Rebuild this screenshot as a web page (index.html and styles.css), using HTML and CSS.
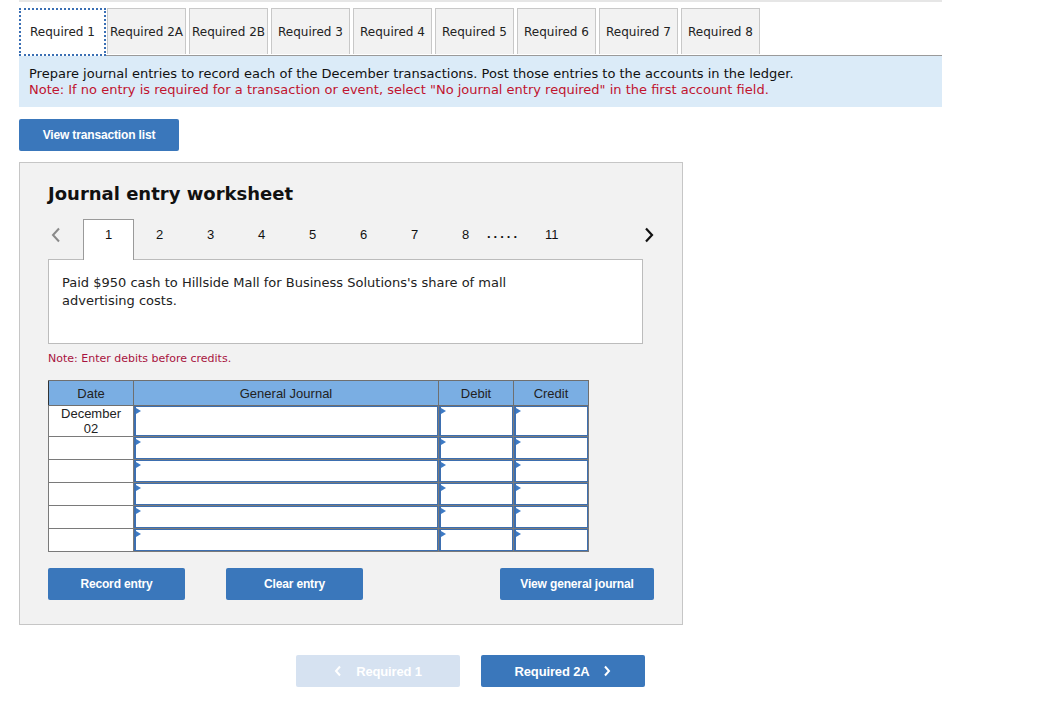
FILE: index.html
```html
<!DOCTYPE html>
<html lang="en">
<head>
<meta charset="UTF-8">
<meta name="viewport" content="width=device-width, initial-scale=1.0">
<title>Journal Entries</title>
<link rel="stylesheet" href="styles.css">
</head>
<body>

<div class="page">
  <div class="req-tabs">
    <div class="req-tab active">Required 1</div>
    <div class="req-tab">Required 2A</div>
    <div class="req-tab">Required 2B</div>
    <div class="req-tab">Required 3</div>
    <div class="req-tab">Required 4</div>
    <div class="req-tab">Required 5</div>
    <div class="req-tab">Required 6</div>
    <div class="req-tab">Required 7</div>
    <div class="req-tab">Required 8</div>
  </div>

  <div class="instructions">
    <p>Prepare journal entries to record each of the December transactions. Post those entries to the accounts in the ledger.</p>
    <p class="note">Note: If no entry is required for a transaction or event, select "No journal entry required" in the first account field.</p>
  </div>

  <button class="btn btn-list">View transaction list</button>

  <div class="worksheet">
    <h2>Journal entry worksheet</h2>

    <div class="entry-nav">
      <span class="arrow prev">
        <svg width="10" height="16" viewBox="0 0 10 16"><path d="M8 1.5 L2 8 L8 14.5" fill="none" stroke="#8a8a8a" stroke-width="2"/></svg>
      </span>
      <span class="num current">1</span>
      <span class="num">2</span>
      <span class="num">3</span>
      <span class="num">4</span>
      <span class="num">5</span>
      <span class="num">6</span>
      <span class="num">7</span>
      <span class="num">8</span>
      <span class="dots">.....</span>
      <span class="num last">11</span>
      <span class="arrow next">
        <svg width="10" height="16" viewBox="0 0 10 16"><path d="M2 1.5 L8 8 L2 14.5" fill="none" stroke="#111" stroke-width="2.2"/></svg>
      </span>
    </div>

    <div class="description">
      Paid $950 cash to Hillside Mall for Business Solutions's share of mall<br>
      advertising costs.
    </div>

    <p class="debit-note">Note: Enter debits before credits.</p>

    <table class="journal">
      <thead>
        <tr>
          <th class="c-date">Date</th>
          <th class="c-acct">General Journal</th>
          <th class="c-amt">Debit</th>
          <th class="c-amt">Credit</th>
        </tr>
      </thead>
      <tbody>
        <tr class="first">
          <td class="date">December<br>02</td>
          <td><div class="field"></div></td>
          <td><div class="field"></div></td>
          <td><div class="field"></div></td>
        </tr>
        <tr>
          <td class="date"></td>
          <td><div class="field"></div></td>
          <td><div class="field"></div></td>
          <td><div class="field"></div></td>
        </tr>
        <tr>
          <td class="date"></td>
          <td><div class="field"></div></td>
          <td><div class="field"></div></td>
          <td><div class="field"></div></td>
        </tr>
        <tr>
          <td class="date"></td>
          <td><div class="field"></div></td>
          <td><div class="field"></div></td>
          <td><div class="field"></div></td>
        </tr>
        <tr>
          <td class="date"></td>
          <td><div class="field"></div></td>
          <td><div class="field"></div></td>
          <td><div class="field"></div></td>
        </tr>
        <tr>
          <td class="date"></td>
          <td><div class="field"></div></td>
          <td><div class="field"></div></td>
          <td><div class="field"></div></td>
        </tr>
      </tbody>
    </table>

    <div class="actions">
      <button class="btn btn-record">Record entry</button>
      <button class="btn btn-clear">Clear entry</button>
      <button class="btn btn-journal">View general journal</button>
    </div>
  </div>

  <div class="pager">
    <button class="btn btn-pager disabled">
      <svg width="8" height="12" viewBox="0 0 8 12"><path d="M6 1.5 L2 6 L6 10.5" fill="none" stroke="#fff" stroke-width="2"/></svg>
      Required 1
    </button>
    <button class="btn btn-pager">
      Required 2A
      <svg width="8" height="12" viewBox="0 0 8 12"><path d="M2 1.5 L6 6 L2 10.5" fill="none" stroke="#fff" stroke-width="2"/></svg>
    </button>
  </div>
</div>

</body>
</html>
```

FILE: styles.css
```css
body {
  margin: 0;
  background: #fff;
  font-family: "DejaVu Sans", Verdana, sans-serif;
  color: #111;
}

.page {
  margin-left: 19px;
  width: 923px;
  border-top: 2px solid #e6e6e6;
}

/* requirement tabs */
.req-tabs {
  display: flex;
  gap: 3px;
  margin-top: 6px;
  border-bottom: 1px solid #9a9a9a;
}
.req-tab {
  width: 77px;
  height: 45px;
  line-height: 47px;
  text-align: center;
  font-size: 12px;
  background: #f2f2f2;
  border: 1px solid #c8c8c8;
  border-bottom: none;
  color: #222;
  white-space: nowrap;
}
.req-tab.active {
  width: 83px;
  height: 44px;
  background: #fff;
  border: 2px dotted #3a6fb4;
  border-bottom: 2px dotted #3a6fb4;
  margin-right: -2px;
  margin-bottom: -1px;
  line-height: 45px;
}

.instructions {
  background: #dbebf8;
  padding: 10px 10px 9px;
  font-size: 13px;
  line-height: 16px;
}
.instructions p {
  margin: 0;
}
.instructions .note {
  color: #c0142f;
}

/* buttons */
.btn {
  font-family: "Liberation Sans", Arial, sans-serif;
  font-weight: bold;
  font-size: 12px;
  letter-spacing: -0.15px;
  color: #fff;
  background: #3a77bb;
  border: none;
  border-radius: 2px;
  height: 32px;
  cursor: pointer;
}
.btn-list {
  display: block;
  width: 160px;
  margin-top: 12px;
}

/* worksheet panel */
.worksheet {
  width: 634px;
  margin-top: 11px;
  background: #f2f2f2;
  border: 1px solid #c6c6c6;
  padding: 17px 0 24px 28px;
}
.worksheet h2 {
  margin: 0;
  font-size: 18px;
  font-weight: bold;
  line-height: 28px;
  color: #111;
}

.entry-nav {
  display: flex;
  align-items: flex-start;
  margin-top: 11px;
  height: 40px;
  font-family: "Liberation Sans", Arial, sans-serif;
  font-size: 13px;
}
.entry-nav .arrow {
  display: flex;
  align-items: center;
  height: 31px;
}
.entry-nav .prev {
  width: 35px;
  padding-left: 3px;
  box-sizing: border-box;
}
.entry-nav .next {
  margin-left: 85px;
}
.entry-nav .num {
  width: 51px;
  text-align: center;
  padding-top: 1px;
  line-height: 30px;
}
.entry-nav .num.current {
  width: 49px;
  height: 40px;
  padding-top: 0;
  background: #fff;
  border: 1px solid #9a9a9a;
  border-bottom: none;
  position: relative;
  z-index: 1;
}
.entry-nav .dots {
  padding-top: 1px;
  line-height: 28px;
  font-weight: bold;
  letter-spacing: 3px;
  margin-left: -4px;
  width: 58px;
}
.entry-nav .num.last {
  width: auto;
}

.description {
  width: 580px;
  height: 69px;
  background: #fff;
  border: 1px solid #bcbcbc;
  padding: 14px 0 0 13px;
  font-size: 13px;
  line-height: 18px;
  color: #222;
}

.debit-note {
  margin: 7px 0 13px;
  font-size: 11px;
  line-height: 16px;
  color: #a8123e;
}

/* journal table */
.journal {
  border-collapse: collapse;
  font-family: "Liberation Sans", Arial, sans-serif;
  font-size: 13px;
  color: #222;
}
.journal th {
  background: #7aaee3;
  height: 24px;
  font-weight: normal;
  border: 1px solid #6f6f6f;
  border-left-color: #333;
  padding: 0;
}
.journal th.c-date {
  width: 84px;
}
.journal th.c-acct {
  width: 304px;
}
.journal th.c-amt {
  width: 74px;
}
.journal td {
  background: #fff;
  border: 1px solid #7a7a7a;
  padding: 0;
  height: 22px;
}
.journal tr.first td {
  height: 30px;
}
.journal td.date {
  text-align: center;
  line-height: 15px;
  vertical-align: top;
}
.journal .field {
  position: relative;
  height: 100%;
  box-sizing: border-box;
  border: 1px solid #3d6fb0;
  border-left-width: 2px;
}
.journal .field::before {
  content: "";
  position: absolute;
  left: 0;
  top: 1px;
  border-top: 3px solid transparent;
  border-bottom: 3px solid transparent;
  border-left: 5px solid #3d7ac4;
}

.actions {
  display: flex;
  margin-top: 16px;
}
.btn-record,
.btn-clear {
  width: 137px;
}
.btn-clear {
  margin-left: 41px;
}
.btn-journal {
  width: 154px;
  margin-left: 137px;
}

/* bottom pager */
.pager {
  display: flex;
  gap: 21px;
  margin: 30px 0 0 277px;
}
.btn-pager {
  width: 164px;
  font-size: 13px;
  display: flex;
  align-items: center;
  justify-content: center;
  gap: 14px;
}
.btn-pager.disabled {
  background: #d6e2f1;
}
```
